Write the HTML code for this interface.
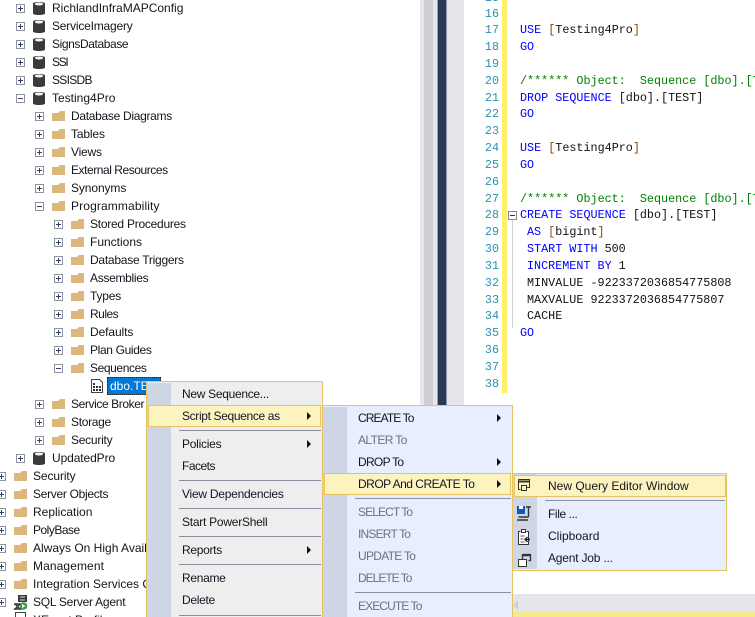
<!DOCTYPE html>
<html style="overflow:hidden;width:755px;height:617px"><head><meta charset="utf-8"><style>
html,body{margin:0;padding:0}
body{width:755px;height:617px;overflow:hidden;background:#fff}
#w{position:relative;width:755px;height:617px;overflow:hidden;background:#fff;font-family:"Liberation Sans",sans-serif;font-size:12px;color:#14141f;contain:paint}
.a{position:absolute}
.t{position:absolute;white-space:nowrap;line-height:18px;height:18px}
.c{position:absolute;white-space:pre;font-family:"Liberation Mono",monospace;font-size:11.75px;line-height:17px;height:17px;color:#0000ff}
.n{position:absolute;left:480px;width:19px;text-align:right;font-family:"Liberation Mono",monospace;font-size:11.75px;line-height:17px;color:#2b91af}
.k{color:#111}.b{color:#8a4a00}.g{color:#008000}
.d{color:#6f6f80}
svg{position:absolute;overflow:visible}
.s{position:absolute;height:1px;background:#8b8f9f}
.hl{position:absolute;background:#fdf3bf;border:1px solid #e5c365;box-sizing:border-box}
.ar{position:absolute;width:0;height:0;border-left:4px solid #111;border-top:4px solid transparent;border-bottom:4px solid transparent}
</style></head><body><div id="w">
<svg width="0" height="0" style="position:absolute"><defs>
<g id="p"><rect x=".5" y=".5" width="8" height="8" fill="#fff" stroke="#8f9296"/><path d="M2 4.500h5M4.500 2v5" stroke="#2f3f6f" stroke-width="1"/></g>
<g id="m"><rect x=".5" y=".5" width="8" height="8" fill="#fff" stroke="#8f9296"/><path d="M2 4.500h5" stroke="#2f3f6f" stroke-width="1"/></g>
<g id="f"><path d="M0 3h6l2-2h5v10H0z" fill="#dcb67a"/></g>
<g id="db"><path d="M0 2.500C0 .5 12 .5 12 2.500V12.500C12 14.500 0 14.500 0 12.500z" fill="#3a3a3a"/><ellipse cx="6" cy="3" rx="4.200" ry="1.500" fill="#f4f4f4"/></g>
</defs></svg>

<!-- tree icons -->
<svg style="left:0;top:0" width="420" height="617">
<use href="#p" x="16" y="4"/><use href="#db" x="33" y="1"/>
<use href="#p" x="16" y="22"/><use href="#db" x="33" y="19"/>
<use href="#p" x="16" y="40"/><use href="#db" x="33" y="37"/>
<use href="#p" x="16" y="58"/><use href="#db" x="33" y="55"/>
<use href="#p" x="16" y="76"/><use href="#db" x="33" y="73"/>
<use href="#m" x="16" y="94"/><use href="#db" x="33" y="91"/>
<use href="#p" x="35" y="112"/><use href="#f" x="52" y="110"/>
<use href="#p" x="35" y="130"/><use href="#f" x="52" y="128"/>
<use href="#p" x="35" y="148"/><use href="#f" x="52" y="146"/>
<use href="#p" x="35" y="166"/><use href="#f" x="52" y="164"/>
<use href="#p" x="35" y="184"/><use href="#f" x="52" y="182"/>
<use href="#m" x="35" y="202"/><use href="#f" x="52" y="200"/>
<use href="#p" x="54" y="220"/><use href="#f" x="71" y="218"/>
<use href="#p" x="54" y="238"/><use href="#f" x="71" y="236"/>
<use href="#p" x="54" y="256"/><use href="#f" x="71" y="254"/>
<use href="#p" x="54" y="274"/><use href="#f" x="71" y="272"/>
<use href="#p" x="54" y="292"/><use href="#f" x="71" y="290"/>
<use href="#p" x="54" y="310"/><use href="#f" x="71" y="308"/>
<use href="#p" x="54" y="328"/><use href="#f" x="71" y="326"/>
<use href="#p" x="54" y="346"/><use href="#f" x="71" y="344"/>
<use href="#m" x="54" y="364"/><use href="#f" x="71" y="362"/>
<path d="M91.500 379.500h8l3 3v10h-11z" fill="#fff" stroke="#444"/><path d="M93 383h2v2h-2zM93 386h2v2h-2zM96 386h2v2h-2zM99 386h2v2h-2zM93 389h2v2h-2zM96 389h2v2h-2zM99 389h2v2h-2z" fill="#333"/>
<use href="#p" x="35" y="400"/><use href="#f" x="52" y="398"/>
<use href="#p" x="35" y="418"/><use href="#f" x="52" y="416"/>
<use href="#p" x="35" y="436"/><use href="#f" x="52" y="434"/>
<use href="#p" x="16" y="454"/><use href="#db" x="33" y="451"/>
<use href="#p" x="-3" y="472"/><use href="#f" x="14" y="470"/>
<use href="#p" x="-3" y="490"/><use href="#f" x="14" y="488"/>
<use href="#p" x="-3" y="508"/><use href="#f" x="14" y="506"/>
<use href="#p" x="-3" y="526"/><use href="#f" x="14" y="524"/>
<use href="#p" x="-3" y="544"/><use href="#f" x="14" y="542"/>
<use href="#p" x="-3" y="562"/><use href="#f" x="14" y="560"/>
<use href="#p" x="-3" y="580"/><use href="#f" x="14" y="578"/>
<use href="#p" x="-3" y="598"/>
<rect x="18" y="595" width="9" height="7" fill="#3a3a3a"/><path d="M20 597h5M20 600h5" stroke="#ddd"/><path d="M14 604h8M15 604l5 5-5 0 5-5M14 609h8" fill="none" stroke="#333" stroke-width="1.400"/><circle cx="23.500" cy="606" r="3.800" fill="#2f9e44"/><path d="M22 604l3.500 2-3.500 2z" fill="#fff"/>
<rect x="15.500" y="612.500" width="10" height="8" fill="#fff" stroke="#444"/>
</svg>

<!-- tree text -->
<div class="t" style="left:52px;top:-1px">RichlandInfraMAPConfig</div>
<div class="t" style="left:52px;top:17px;letter-spacing:-.2px">ServiceImagery</div>
<div class="t" style="left:52px;top:35px;letter-spacing:-.4px">SignsDatabase</div>
<div class="t" style="left:52px;top:53px;letter-spacing:-1.3px">SSI</div>
<div class="t" style="left:52px;top:71px;letter-spacing:-.7px">SSISDB</div>
<div class="t" style="left:52px;top:89px">Testing4Pro</div>
<div class="t" style="left:71px;top:107px;letter-spacing:-.3px">Database Diagrams</div>
<div class="t" style="left:71px;top:125px;letter-spacing:-.15px">Tables</div>
<div class="t" style="left:71px;top:143px;letter-spacing:-.2px">Views</div>
<div class="t" style="left:71px;top:161px;letter-spacing:-.45px">External Resources</div>
<div class="t" style="left:71px;top:179px;letter-spacing:-.1px">Synonyms</div>
<div class="t" style="left:71px;top:197px;letter-spacing:.13px">Programmability</div>
<div class="t" style="left:90px;top:215px;letter-spacing:-.25px">Stored Procedures</div>
<div class="t" style="left:90px;top:233px">Functions</div>
<div class="t" style="left:90px;top:251px;letter-spacing:-.25px">Database Triggers</div>
<div class="t" style="left:90px;top:269px;letter-spacing:-.3px">Assemblies</div>
<div class="t" style="left:90px;top:287px;letter-spacing:-.2px">Types</div>
<div class="t" style="left:90px;top:305px;letter-spacing:-.5px">Rules</div>
<div class="t" style="left:90px;top:323px;letter-spacing:-.1px">Defaults</div>
<div class="t" style="left:90px;top:341px;letter-spacing:-.35px">Plan Guides</div>
<div class="t" style="left:90px;top:359px;letter-spacing:-.4px">Sequences</div>
<div class="a" style="left:107px;top:377px;width:54px;height:18px;background:#0078d7;box-sizing:border-box;border:1px dotted #222"></div>
<div class="t" style="left:110px;top:377px;color:#fff">dbo.TEST</div>
<div class="t" style="left:71px;top:395px;letter-spacing:-.4px">Service Broker</div>
<div class="t" style="left:71px;top:413px;letter-spacing:-.3px">Storage</div>
<div class="t" style="left:71px;top:431px;letter-spacing:-.25px">Security</div>
<div class="t" style="left:52px;top:449px;letter-spacing:-.1px">UpdatedPro</div>
<div class="t" style="left:33px;top:467px;letter-spacing:-.1px">Security</div>
<div class="t" style="left:33px;top:485px;letter-spacing:-.3px">Server Objects</div>
<div class="t" style="left:33px;top:503px">Replication</div>
<div class="t" style="left:33px;top:521px;letter-spacing:-.5px">PolyBase</div>
<div class="t" style="left:33px;top:539px">Always On High Availability</div>
<div class="t" style="left:33px;top:557px;letter-spacing:.1px">Management</div>
<div class="t" style="left:33px;top:575px">Integration Services Catalogs</div>
<div class="t" style="left:33px;top:593px;letter-spacing:-.25px">SQL Server Agent</div>
<div class="t" style="left:33px;top:611px">XEvent Profiler</div>

<!-- splitter -->
<div class="a" style="left:420px;top:0;width:44px;height:617px;background:#e6e6ea"></div>
<div class="a" style="left:424px;top:0;width:9px;height:617px;background:#cdced3"></div>
<div class="a" style="left:437px;top:0;width:1px;height:617px;background:#9aa0b0"></div>
<div class="a" style="left:438px;top:0;width:8px;height:617px;background:#293955"></div>
<div class="a" style="left:446px;top:0;width:1px;height:617px;background:#8f97ad"></div>
<div class="a" style="left:447px;top:0;width:17px;height:617px;background:#e4e5e8"></div>
<div class="a" style="left:464px;top:0;width:291px;height:617px;background:#fff"></div>

<!-- editor -->
<div class="a" style="left:502px;top:0;width:5px;height:393px;background:#fff06a"></div>
<div class="n" style="top:-10px">15</div><div class="n" style="top:6px">16</div><div class="n" style="top:22px">17</div><div class="n" style="top:39px">18</div><div class="n" style="top:56px">19</div><div class="n" style="top:73px">20</div><div class="n" style="top:90px">21</div><div class="n" style="top:106px">22</div><div class="n" style="top:123px">23</div><div class="n" style="top:140px">24</div><div class="n" style="top:157px">25</div><div class="n" style="top:174px">26</div><div class="n" style="top:191px">27</div><div class="n" style="top:207px">28</div><div class="n" style="top:224px">29</div><div class="n" style="top:241px">30</div><div class="n" style="top:258px">31</div><div class="n" style="top:275px">32</div><div class="n" style="top:292px">33</div><div class="n" style="top:308px">34</div><div class="n" style="top:325px">35</div><div class="n" style="top:342px">36</div><div class="n" style="top:359px">37</div><div class="n" style="top:376px">38</div>
<svg style="left:505px;top:205px" width="15" height="125"><rect x="3.500" y="6.500" width="8" height="8" fill="#fff" stroke="#888"/><path d="M5 10.500h5" stroke="#333"/><path d="M7.500 15v108" stroke="#d0d0d0"/></svg>
<div class="c" style="left:520px;top:-11px">GO</div>
<div class="c" style="left:520px;top:22px">USE <span class="b">[</span><span class="k">Testing4Pro</span><span class="b">]</span></div>
<div class="c" style="left:520px;top:39px">GO</div>
<div class="c g" style="left:520px;top:73px">/****** Object:  Sequence [dbo].[TEST]</div>
<div class="c" style="left:520px;top:90px">DROP SEQUENCE <span class="k">[dbo].[TEST]</span></div>
<div class="c" style="left:520px;top:106px">GO</div>
<div class="c" style="left:520px;top:140px">USE <span class="b">[</span><span class="k">Testing4Pro</span><span class="b">]</span></div>
<div class="c" style="left:520px;top:157px">GO</div>
<div class="c g" style="left:520px;top:191px">/****** Object:  Sequence [dbo].[TEST]</div>
<div class="c" style="left:520px;top:207px">CREATE SEQUENCE <span class="k">[dbo].[TEST]</span></div>
<div class="c" style="left:527px;top:224px">AS <span class="b">[</span><span class="k">bigint</span><span class="b">]</span></div>
<div class="c" style="left:527px;top:241px">START WITH <span class="k">500</span></div>
<div class="c" style="left:527px;top:258px">INCREMENT BY <span class="k">1</span></div>
<div class="c" style="left:527px;top:275px"><span class="k">MINVALUE -9223372036854775808</span></div>
<div class="c" style="left:527px;top:292px"><span class="k">MAXVALUE 9223372036854775807</span></div>
<div class="c" style="left:527px;top:308px"><span class="k">CACHE</span></div>
<div class="c" style="left:520px;top:325px">GO</div>

<!-- bottom scrollbar -->
<div class="a" style="left:513px;top:594px;width:242px;height:18px;background:#e6e6ea"></div>
<div class="a" style="left:513px;top:600px;width:0;height:0;border-right:5px solid #d0d0d6;border-top:5px solid transparent;border-bottom:5px solid transparent"></div>
<div class="a" style="left:513px;top:612px;width:242px;height:5px;background:#f6e98a"></div>

<!-- menu 1 -->
<div class="a" style="left:146px;top:381px;width:177px;height:240px;background:#eeeeef;border:1px solid #e5c365;box-sizing:border-box"></div>
<div class="a" style="left:147px;top:383px;width:24px;height:234px;background:#ced5e5"></div>
<div class="hl" style="left:148px;top:405px;width:173px;height:22px"></div>
<div class="t" style="left:182px;top:385px;letter-spacing:-.3px">New Sequence...</div>
<div class="t" style="left:182px;top:407px;letter-spacing:-.35px">Script Sequence as</div><div class="ar" style="left:307px;top:412px"></div>
<div class="s" style="left:179px;top:430px;width:142px"></div>
<div class="t" style="left:182px;top:435px;letter-spacing:-.25px">Policies</div><div class="ar" style="left:307px;top:440px"></div>
<div class="t" style="left:182px;top:457px;letter-spacing:-.5px">Facets</div>
<div class="s" style="left:179px;top:480px;width:142px"></div>
<div class="t" style="left:182px;top:485px;letter-spacing:-.25px">View Dependencies</div>
<div class="s" style="left:179px;top:508px;width:142px"></div>
<div class="t" style="left:182px;top:513px;letter-spacing:-.25px">Start PowerShell</div>
<div class="s" style="left:179px;top:536px;width:142px"></div>
<div class="t" style="left:182px;top:541px;letter-spacing:-.3px">Reports</div><div class="ar" style="left:307px;top:546px"></div>
<div class="s" style="left:179px;top:564px;width:142px"></div>
<div class="t" style="left:182px;top:569px;letter-spacing:-.3px">Rename</div>
<div class="t" style="left:182px;top:591px;letter-spacing:-.3px">Delete</div>
<div class="s" style="left:179px;top:615px;width:142px"></div>

<!-- menu 2 -->
<div class="a" style="left:322px;top:405px;width:191px;height:216px;background:#e8eefd;border:1px solid #e5c365;box-sizing:border-box"></div>
<div class="a" style="left:323px;top:407px;width:24px;height:210px;background:#ced5e5"></div>
<div class="hl" style="left:324px;top:473px;width:187px;height:22px"></div>
<div class="t" style="left:358px;top:409px;letter-spacing:-.9px">CREATE To</div><div class="ar" style="left:497px;top:414px"></div>
<div class="t d" style="left:358px;top:431px;letter-spacing:-.6px">ALTER To</div>
<div class="t" style="left:358px;top:453px;letter-spacing:-.7px">DROP To</div><div class="ar" style="left:497px;top:458px"></div>
<div class="t" style="left:358px;top:475px;letter-spacing:-.5px">DROP And CREATE To</div><div class="ar" style="left:497px;top:480px"></div>
<div class="s" style="left:355px;top:498px;width:156px"></div>
<div class="t d" style="left:358px;top:503px;letter-spacing:-.9px">SELECT To</div>
<div class="t d" style="left:358px;top:525px;letter-spacing:-.8px">INSERT To</div>
<div class="t d" style="left:358px;top:547px;letter-spacing:-.7px">UPDATE To</div>
<div class="t d" style="left:358px;top:569px;letter-spacing:-1px">DELETE To</div>
<div class="s" style="left:355px;top:592px;width:156px"></div>
<div class="t d" style="left:358px;top:597px;letter-spacing:-.9px">EXECUTE To</div>

<!-- menu 3 -->
<div class="a" style="left:512px;top:473px;width:215px;height:98px;background:#e8eefd;border:1px solid #e5c365;box-sizing:border-box"></div>
<div class="a" style="left:513px;top:474px;width:24px;height:95px;background:#ced5e5"></div>
<div class="hl" style="left:514px;top:475px;width:212px;height:22px"></div>
<div class="s" style="left:545px;top:500px;width:180px"></div>
<div class="t" style="left:548px;top:477px">New Query Editor Window</div>
<div class="t" style="left:548px;top:505px;letter-spacing:-.4px">File ...</div>
<div class="t" style="left:548px;top:527px">Clipboard</div>
<div class="t" style="left:548px;top:549px;letter-spacing:-.2px">Agent Job ...</div>
<svg style="left:512px;top:474px" width="30" height="96">
<path d="M6.500 5.500h11v8h-3M6.500 5.500v10h2" fill="none" stroke="#333"/><path d="M6 7.500h12" stroke="#333" stroke-width="2"/><rect x="9.500" y="11.500" width="5" height="5" fill="none" stroke="#333"/>
<rect x="5" y="32" width="8" height="8" fill="#0a5db0"/><rect x="7" y="32" width="4" height="3" fill="#fff"/><path d="M14 33h5M16.500 33v10M6.500 43h10M5 46h11" stroke="#333" stroke-width="1.400" fill="none"/>
<path d="M8.500 57.500h-2v13h10v-13h-2" fill="#fff" stroke="#333"/><rect x="9.500" y="55.500" width="4" height="3" fill="#fff" stroke="#333"/><path d="M8.500 62h4M8.500 65h3M8.500 68h4" stroke="#555"/><path d="M13 65.500h5M15.500 63l-2.500 2.500 2.500 2.500" stroke="#222" stroke-width="1.400" fill="none"/>
<path d="M10.500 86v-5.500h8v6h-2" fill="none" stroke="#333" stroke-width="1.300"/><path d="M10 81.500h9" stroke="#333" stroke-width="1.500"/><rect x="6.500" y="85.500" width="8" height="7" fill="#fff" stroke="#333"/>
</svg>
</div></body></html>
